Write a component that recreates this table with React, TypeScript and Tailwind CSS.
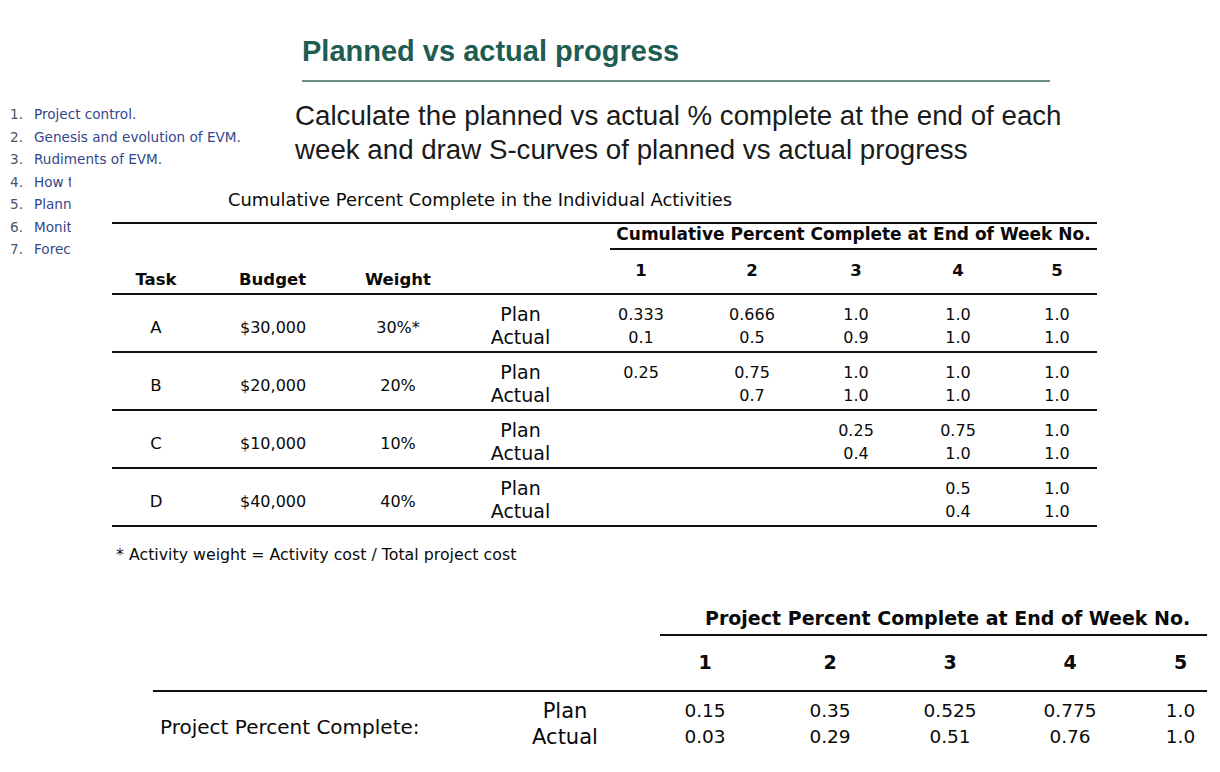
import React from "react";

const menuItems = [
  "Project control.",
  "Genesis and evolution of EVM.",
  "Rudiments of EVM.",
  "How to apply EVM.",
  "Planning for EVM.",
  "Monitoring with EVM.",
  "Forecasting with EVM.",
];

interface TaskRow {
  task: string;
  budget: string;
  weight: string;
  plan: string[];
  actual: string[];
}

const rows: TaskRow[] = [
  {
    task: "A",
    budget: "$30,000",
    weight: "30%*",
    plan: ["0.333", "0.666", "1.0", "1.0", "1.0"],
    actual: ["0.1", "0.5", "0.9", "1.0", "1.0"],
  },
  {
    task: "B",
    budget: "$20,000",
    weight: "20%",
    plan: ["0.25", "0.75", "1.0", "1.0", "1.0"],
    actual: ["", "0.7", "1.0", "1.0", "1.0"],
  },
  {
    task: "C",
    budget: "$10,000",
    weight: "10%",
    plan: ["", "", "0.25", "0.75", "1.0"],
    actual: ["", "", "0.4", "1.0", "1.0"],
  },
  {
    task: "D",
    budget: "$40,000",
    weight: "40%",
    plan: ["", "", "", "0.5", "1.0"],
    actual: ["", "", "", "0.4", "1.0"],
  },
];

const weeks = ["1", "2", "3", "4", "5"];
const projectPlan = ["0.15", "0.35", "0.525", "0.775", "1.0"];
const projectActual = ["0.03", "0.29", "0.51", "0.76", "1.0"];

// column template for the activity table (x = 112 .. 1097)
const activityCols =
  "grid grid-cols-[88px_140px_116px_129px_112px_110px_98px_106px_86px]";
// column template for the project table (x = 153 .. 1207)
const projectCols = "grid grid-cols-[347px_130px_150px_100px_140px_100px_87px]";

const App: React.FC = () => {
  return (
    <div className="w-[1220px] h-[772px] overflow-hidden bg-white">
      {/* slide title */}
      <div className="pl-[302px] pt-[34px]">
        <h1 className="text-[29px] leading-[34px] font-bold text-[#1f5c52] font-['Liberation_Sans',Arial,sans-serif]">
          Planned vs actual progress
        </h1>
        <div className="mt-[12px] h-[2px] w-[748px] bg-[#6a9189]" />
      </div>

      <div className="flex">
        <ol className="w-[295px] shrink-0 pl-[10px] mt-[21px] font-['DejaVu_Sans',sans-serif] text-[13.6px] leading-[22.5px]">
          {menuItems.map((item, i) => (
            <li key={item} className="flex whitespace-nowrap">
              <span className="w-[24px] text-[#4b5468]">{i + 1}.</span>
              <span className="text-[#34468a]">{item}</span>
            </li>
          ))}
        </ol>
        <p className="mt-[17px] whitespace-nowrap text-[27.7px] leading-[34px] text-[#1a1a1a] font-['Liberation_Sans',Arial,sans-serif]">
          Calculate the planned vs actual % complete at the end of each
          <br />
          week and draw S-curves of planned vs actual progress
        </p>
      </div>

      {/* scanned table sheet, lies over the outline list */}
      <div className="relative -mt-[96px] ml-[71px] bg-white pt-[24px] pl-[41px] text-[#0a0a0a] font-['DejaVu_Sans',sans-serif]">
        <div className="pl-[116px] text-[17.9px] leading-[22px] whitespace-nowrap">
          Cumulative Percent Complete in the Individual Activities
        </div>

        <div className="mt-[11px] w-[985px]">
          {/* header */}
          <div className={`${activityCols} grid-rows-[26px_43px] border-t-2 border-[#111]`}>
            <div className="row-span-2 self-end pb-[3px] text-center text-[16.5px] leading-[20px] font-bold">
              Task
            </div>
            <div className="row-span-2 self-end pb-[3px] pl-[39px] text-[16.5px] leading-[20px] font-bold">
              Budget
            </div>
            <div className="row-span-2 self-end pb-[3px] pl-[25px] text-[16.5px] leading-[20px] font-bold">
              Weight
            </div>
            <div className="row-span-2" />
            <div className="col-span-5 ml-[25px] border-b-2 border-[#111] text-center text-[17px] leading-[20px] font-bold whitespace-nowrap">
              Cumulative Percent Complete at End of Week No.
            </div>
            {weeks.map((w, i) => (
              <div
                key={w}
                className={`flex items-center justify-center text-[16.5px] font-bold ${i === 4 ? "pl-[6px]" : ""}`}
              >
                {w}
              </div>
            ))}
          </div>

          {/* activity rows */}
          <div className="border-b-2 border-[#111]">
            {rows.map((r) => (
              <div key={r.task} className={`${activityCols} h-[58px] border-t-2 border-[#111]`}>
                <div className="pt-[10px] text-center text-[16.5px] leading-[46px]">{r.task}</div>
                <div className="pt-[10px] pl-[40px] text-[16px] leading-[46px]">{r.budget}</div>
                <div className="pt-[10px] text-center text-[16px] leading-[46px]">{r.weight}</div>
                <div className="pt-[8px] text-center text-[19px] leading-[23px]">
                  <div>Plan</div>
                  <div>Actual</div>
                </div>
                {weeks.map((w, i) => (
                  <div
                    key={w}
                    className={`pt-[8px] text-center text-[16px] leading-[23px] ${i === 4 ? "pl-[6px]" : ""}`}
                  >
                    <div className="h-[23px]">{r.plan[i]}</div>
                    <div className="h-[23px]">{r.actual[i]}</div>
                  </div>
                ))}
              </div>
            ))}
          </div>
        </div>

        <div className="mt-[18px] ml-[4px] text-[15.8px] leading-[20px] whitespace-nowrap">
          * Activity weight = Activity cost / Total project cost
        </div>

        {/* project totals */}
        <div className="mt-[35px] ml-[41px] w-[1054px]">
          <div className={`${projectCols} grid-rows-[36px_54px]`}>
            <div className="col-span-2 row-span-2" />
            <div className="col-span-5 ml-[30px] border-b-2 border-[#111] pt-[6px] pl-[45px] text-[19px] leading-[24px] font-bold whitespace-nowrap">
              Project Percent Complete at End of Week No.
            </div>
            {weeks.map((w, i) => (
              <div
                key={w}
                className={`flex items-center justify-center text-[19px] font-bold ${i === 4 ? "pl-[34px]" : ""}`}
              >
                {w}
              </div>
            ))}
          </div>
          <div className={`${projectCols} border-t-2 border-[#111]`}>
            <div className="pt-[23px] pl-[7px] text-[20px] leading-[24px] whitespace-nowrap">
              Project Percent Complete:
            </div>
            <div className="pt-[6px] text-center text-[21px] leading-[26px]">
              <div>Plan</div>
              <div>Actual</div>
            </div>
            {weeks.map((w, i) => (
              <div
                key={w}
                className={`pt-[6px] text-center text-[18.5px] leading-[26px] ${i === 4 ? "pl-[34px]" : ""}`}
              >
                <div>{projectPlan[i]}</div>
                <div>{projectActual[i]}</div>
              </div>
            ))}
          </div>
        </div>
      </div>
    </div>
  );
};

export default App;
